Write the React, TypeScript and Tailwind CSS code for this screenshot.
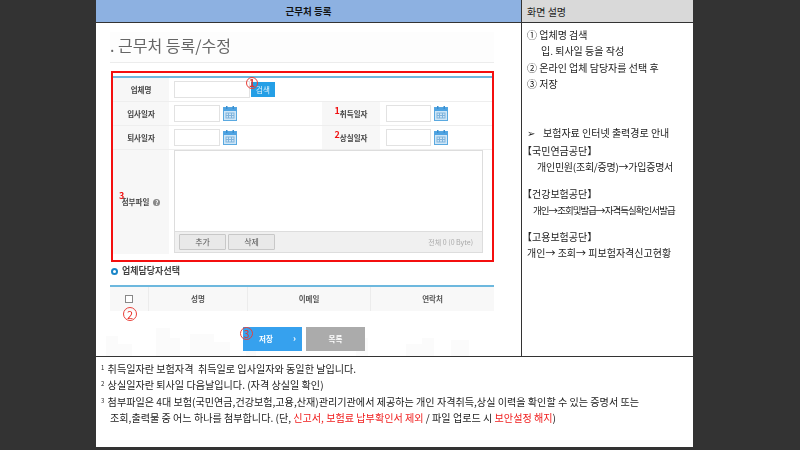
const font = "font-['Noto_Sans_CJK_KR','Noto_Sans',sans-serif]";

function Cal() {
  return (
    <svg width="14" height="15" viewBox="0 0 14 15" className="shrink-0">
      <rect x="0.5" y="1.5" width="13" height="13" fill="#cfe6f7" stroke="#5aa9e0" />
      <rect x="0.5" y="1.5" width="13" height="3.5" fill="#4ea3e2" />
      <rect x="3" y="0" width="1.5" height="3" fill="#3a8fd0" />
      <rect x="9.5" y="0" width="1.5" height="3" fill="#3a8fd0" />
      <rect x="3" y="7" width="8" height="5" fill="none" stroke="#7fb3dc" />
      <path d="M5.5 7v5M8.5 7v5M3 9.5h8" stroke="#7fb3dc" />
    </svg>
  );
}

function Field({ w = "w-[46px]" }: { w?: string }) {
  return <div className={`${w} h-[17px] bg-white border border-[#e2e2e2]`} />;
}

function Label({ children, mark }: { children: string; mark?: string }) {
  return (
    <div className="relative h-full flex items-center justify-center bg-[#f7f7f7] text-[7.5px] font-bold text-[#444]">
      {mark && <span className="text-[9px] leading-none text-[#f01010] font-bold mb-[6px]">{mark}</span>}
      {children}
    </div>
  );
}

function Circled({ children, className }: { children: string; className: string }) {
  return (
    <span className={`absolute rounded-full border border-[#e8403a] text-[#e8302a] flex items-center justify-center leading-none ${className}`}>
      {children}
    </span>
  );
}

function FormPanel() {
  return (
    <div className="relative flex-1 bg-white pl-[14px] pr-[27px] pt-[9px] blur-[0.35px]">
      <svg className="absolute left-[10px] bottom-0" width="390" height="32" viewBox="0 0 390 32">
        <path d="M0 32V12h12v8h14v12zM50 32V4h14v10h10v18zM84 32V10h24v8h16v14zM140 32v-8h10v8zM250 32V14h12v18zM300 32V20h16v-6h12v18zM345 32V16h18v16z" fill="#fbfbfb" />
      </svg>
      <div className="relative h-[31px] border-b border-[#ececec] text-[16px] leading-[26px] text-[#666] bg-[#fdfdfd]">. 근무처 등록/수정</div>

      <div className="relative mt-[8px] ml-[1px] border-2 border-[#f40f0f] h-[191px] pt-[3px]">
        <div className="border-t-2 border-[#6db8de]">
          <div className="grid grid-cols-[56px_1fr] h-[24px] border-b border-[#eeeeee]">
            <Label>업체명</Label>
            <div className="flex items-center pl-[5px] gap-[1px]">
              <Field w="w-[76px]" />
              <div className="w-[24px] h-[15px] bg-[#249fe6] text-[#dff1fb] text-[7.5px] leading-[15px] text-center">검색</div>
            </div>
          </div>
          {[
            ["입사일자", "취득일자", "1"],
            ["퇴사일자", "상실일자", "2"],
          ].map(([a, b, m]) => (
            <div key={a} className="grid grid-cols-[56px_153px_58px_1fr] h-[24px] border-b border-[#eeeeee]">
              <Label>{a}</Label>
              <div className="flex items-center pl-[5px] gap-[3px]">
                <Field />
                <Cal />
              </div>
              <Label mark={m}>{b}</Label>
              <div className="flex items-center pl-[6px] gap-[3px]">
                <Field w="w-[45px]" />
                <Cal />
              </div>
            </div>
          ))}
          <div className="grid grid-cols-[56px_1fr] h-[104px]">
            <div className="relative bg-[#f7f7f7] flex items-center justify-center gap-[4px] text-[7.5px] font-bold text-[#444]">
              <span className="absolute left-[6px] top-[41px] text-[9px] leading-none text-[#f01010]">3</span>
              <span>첨부파일</span>
              <span className="w-[7px] h-[7px] rounded-full bg-[#888] text-white text-[6px] leading-[7px] text-center">?</span>
            </div>
            <div className="pl-[5px] pr-[9px]">
              <div className="h-[103px] border border-[#dddddd] flex flex-col">
                <div className="flex-1 bg-white" />
                <div className="h-[21px] bg-[#f0f0f0] border-t border-[#dddddd] flex items-center pl-[4px] gap-[2px] text-[8px] text-[#555]">
                  <div className="w-[47px] h-[16px] bg-[#e9e9e9] border border-[#c8c8c8] rounded-[1px] text-center leading-[14px]">추가</div>
                  <div className="w-[47px] h-[16px] bg-[#e9e9e9] border border-[#c8c8c8] rounded-[1px] text-center leading-[14px]">삭제</div>
                  <span className="ml-auto mr-[9px] text-[7px] text-[#aaa]">전체 0 (0 Byte)</span>
                </div>
              </div>
            </div>
          </div>
        </div>
        <Circled className="left-[133px] top-[4px] w-[12px] h-[12px] text-[10px] font-bold">1</Circled>
      </div>

      <div className="relative flex items-center gap-[4px] mt-[2px] h-[14px] text-[9px] font-bold text-[#444]">
        <span className="w-[7px] h-[7px] rounded-full border-2 border-[#1a86c8] ml-[1px]" />
        업체담당자선택
      </div>

      <div className="relative mt-[7px] border-t-2 border-[#6db8de] h-[26px] grid grid-cols-[39px_99px_123px_1fr] bg-[#f8f8f8] text-[7.5px] font-bold text-[#555]">
        <div className="flex items-center justify-center border-r border-[#ececec]">
          <span className="w-[8px] h-[8px] bg-white border border-[#888]" />
        </div>
        <div className="flex items-center justify-center border-r border-[#ececec]">성명</div>
        <div className="flex items-center justify-center border-r border-[#ececec]">이메일</div>
        <div className="flex items-center justify-center">연락처</div>
      </div>

      <div className="relative mt-[16px] flex justify-center gap-[4px] pl-[4px]">
        <div className="relative w-[59px] h-[24px] bg-[#36a1ee] text-white text-[7.5px] font-bold flex items-center pl-[16px]">
          저장
          <span className="absolute right-[6px] text-[9px]">›</span>
        </div>
        <div className="w-[59px] h-[24px] bg-[#ababab] text-white text-[7.5px] font-bold flex items-center justify-center">목록</div>
      </div>

      <Circled className="left-[27px] top-[284px] w-[14px] h-[14px] text-[11px] font-normal">2</Circled>
      <Circled className="left-[144px] top-[304px] w-[13px] h-[13px] text-[10px] font-normal">3</Circled>
    </div>
  );
}

function Side() {
  const lineCls = "h-[16.3px] leading-[16.3px] whitespace-nowrap";
  return (
    <div className="flex-1 pl-[5px] pt-[4px] text-[10px] text-[#222] blur-[0.2px] overflow-hidden">
      <div className={lineCls}>① 업체명 검색</div>
      <div className={`${lineCls} pl-[14px]`}>입. 퇴사일 등을 작성</div>
      <div className={lineCls}>② 온라인 업체 담당자를 선택 후</div>
      <div className={lineCls}>③ 저장</div>
      <div className="h-[33px]" />
      <div className={`${lineCls} flex`}><span className="w-[16px]">➢</span>보험자료 인터넷 출력경로 안내</div>
      <div className={`${lineCls} ml-[-5px] mt-[1.5px]`}>【국민연금공단】</div>
      <div className={`${lineCls} pl-[10px] tracking-[-0.25px]`}>개인민원(조회/증명)→가입증명서</div>
      <div className="h-[10px]" />
      <div className={`${lineCls} ml-[-5px]`}>【건강보험공단】</div>
      <div className={`${lineCls} pl-[6px] text-[9.5px] tracking-[-0.95px]`}>개인→조회및발급→자격득실확인서발급</div>
      <div className="h-[11px]" />
      <div className={`${lineCls} ml-[-5px]`}>【고용보험공단】</div>
      <div className={lineCls}>개인→ 조회→ 피보험자격신고현황</div>
    </div>
  );
}

export default function App() {
  const noteCls = "h-[16.4px] leading-[16.4px] whitespace-nowrap";
  return (
    <div className={`w-[800px] h-[450px] bg-[#333333] pl-[96px] overflow-hidden ${font}`}>
      <div className="w-[597px] h-[447px] bg-white flex flex-col">
        <div className="h-[23px] flex border-b border-[#333] shrink-0">
          <div className="w-[426px] bg-[#8db1e1] flex items-center justify-center text-[9.5px] font-bold text-[#111] border-r border-[#333]">근무처 등록</div>
          <div className="flex-1 bg-[#d9d9d9] flex items-center pl-[5px] text-[10px] text-[#222]">화면 설명</div>
        </div>
        <div className="h-[334px] flex border-b border-[#333] shrink-0">
          <div className="w-[426px] flex border-r border-[#333] overflow-hidden">
            <FormPanel />
          </div>
          <Side />
        </div>
        <div className="flex-1 pl-[5px] pt-[4px] text-[10.1px] text-[#222] blur-[0.2px]">
          <div className={noteCls}><sup className="text-[6px] mr-[1px]">1</sup> 취득일자란 보험자격&nbsp; 취득일로 입사일자와 동일한 날입니다.</div>
          <div className={noteCls}><sup className="text-[6px] mr-[1px]">2</sup> 상실일자란 퇴사일 다음날입니다. (자격 상실일 확인)</div>
          <div className={noteCls}><sup className="text-[6px] mr-[1px]">3</sup> 첨부파일은 4대 보험(국민연금,건강보험,고용,산재)관리기관에서 제공하는 개인 자격취득,상실 이력을 확인할 수 있는 증명서 또는</div>
          <div className={`${noteCls} pl-[9px]`}>조회,출력물 중 어느 하나를 첨부합니다. (단, <span className="text-[#f01c1c]">신고서, 보험료 납부확인서 제외</span> / 파일 업로드 시 <span className="text-[#f01c1c]">보안설정 해지</span>)</div>
        </div>
      </div>
    </div>
  );
}
